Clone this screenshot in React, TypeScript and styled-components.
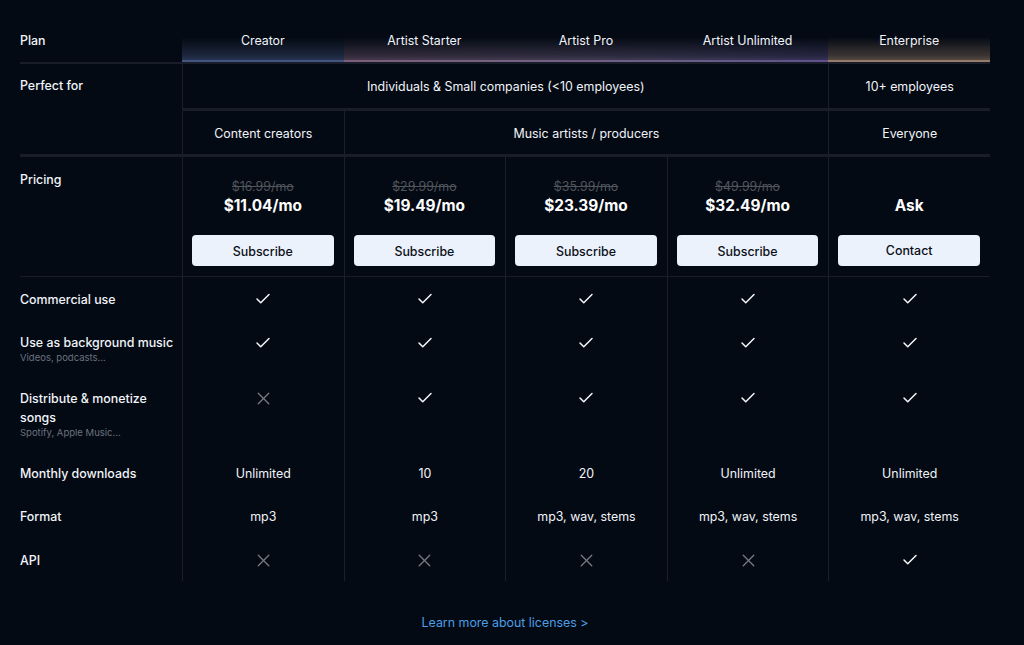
import React from "react";
import styled, { createGlobalStyle } from "styled-components";
import { Check, X } from "lucide-react";

const Global = createGlobalStyle`
  html, body { margin: 0; padding: 0; background: #040a13; }
  body { font-family: Inter, "Liberation Sans", sans-serif; color: #f1f4f9; overflow: hidden; }
`;

const Page = styled.main`
  width: 1024px;
  height: 645px;
  padding: 20px 34px 0 20px;
  box-sizing: border-box;
`;

const Table = styled.div`
  display: grid;
  grid-template-columns: 162px repeat(5, 161.6px);
  font-size: 12.4px;
  line-height: 19.5px;
`;

const Label = styled.div<{ $rows?: number; $line?: number }>`
  grid-row: span ${(p) => p.$rows ?? 1};
  padding: 12.6px 0 11.4px;
  font-weight: 500;
  border-bottom: ${(p) => p.$line ?? 0}px solid #191d29;
`;

const PlanLabel = styled(Label)`
  padding: 11px 0 0;
`;

const PerfectLabel = styled(Label)`
  padding-top: 12px;
`;

const Sub = styled.div`
  font-size: 9.5px;
  font-weight: 400;
  line-height: 12px;
  color: #6b7280;
  margin: -1px 0 1px;
`;

const PlanCell = styled.div<{ $from: string; $to: string }>`
  position: relative;
  height: 44px;
  box-sizing: border-box;
  padding-top: 11px;
  text-align: center;
  border-bottom: 2px solid #191d29;
  &::before {
    content: "";
    position: absolute;
    inset: 0;
    background: linear-gradient(to right, ${(p) => p.$from}, ${(p) => p.$to});
    mask-image: linear-gradient(to bottom, transparent 40%, rgba(0, 0, 0, 0.3) 85%, rgba(0, 0, 0, 0.5) 100%);
  }
  &::after {
    content: "";
    position: absolute;
    left: 0;
    right: 0;
    bottom: 0;
    height: 2px;
    background: linear-gradient(to right, ${(p) => p.$from}, ${(p) => p.$to});
    opacity: 0.6;
  }
`;

const PlanName = styled.span`
  position: relative;
  z-index: 1;
`;

const Cell = styled.div<{ $span?: number }>`
  grid-column: span ${(p) => p.$span ?? 1};
  display: flex;
  justify-content: center;
  align-items: flex-start;
  text-align: center;
  border-left: 1px solid #1b1f2b;
  box-sizing: border-box;
  padding: 12.6px 9.5px 11.4px 9.5px;
`;

const AudienceCell = styled(Cell)`
  align-items: center;
  height: 47px;
  padding: 1px 9.5px 0;
  border-bottom: 3px solid #191d29;
`;

const LowerAudienceCell = styled(AudienceCell)`
  height: 46px;
  padding-top: 2px;
`;

const PriceCell = styled.div`
  border-left: 1px solid #1b1f2b;
  border-bottom: 1px solid #191d29;
  height: 120px;
  padding: 20px 10px 10px 9px;
  box-sizing: border-box;
  display: flex;
  flex-direction: column;
  align-items: stretch;
  text-align: center;
`;

const OldPrice = styled.s`
  display: block;
  height: 17px;
  font-size: 12.4px;
  line-height: 19px;
  color: #50555c;
`;

const Price = styled.div`
  height: 22px;
  font-size: 15.4px;
  font-weight: 700;
  line-height: 24px;
  color: #ffffff;
  margin-bottom: 19px;
`;

const Button = styled.button`
  height: 31.5px;
  border: 0;
  border-radius: 4px;
  background: #ecf2fc;
  color: #0b0f18;
  font: 500 12.4px Inter, "Liberation Sans", sans-serif;
  padding: 1px 0 0;
`;

const CheckIcon = styled(Check)`
  width: 18px;
  height: 18px;
  margin-top: 0.5px;
  color: #f5f7fa;
`;

const CrossIcon = styled(X)`
  width: 21px;
  height: 21px;
  margin: -1px 0 -1px;
  color: #787c83;
`;

const Footer = styled.div`
  width: 970px;
  margin-top: 30px;
  text-align: center;
`;

const LearnMore = styled.a`
  font-size: 12.4px;
  line-height: 20px;
  color: #4a9fe6;
  text-decoration: none;
`;

const prices = [
  ["$16.99/mo", "$11.04/mo", "Subscribe"],
  ["$29.99/mo", "$19.49/mo", "Subscribe"],
  ["$35.99/mo", "$23.39/mo", "Subscribe"],
  ["$49.99/mo", "$32.49/mo", "Subscribe"],
  ["", "Ask", "Contact"],
];

type Value = boolean | string;

const rows: { label: string; sub?: string; values: Value[] }[] = [
  { label: "Commercial use", values: [true, true, true, true, true] },
  { label: "Use as background music", sub: "Videos, podcasts...", values: [true, true, true, true, true] },
  { label: "Distribute & monetize songs", sub: "Spotify, Apple Music...", values: [false, true, true, true, true] },
  { label: "Monthly downloads", values: ["Unlimited", "10", "20", "Unlimited", "Unlimited"] },
  { label: "Format", values: ["mp3", "mp3", "mp3, wav, stems", "mp3, wav, stems", "mp3, wav, stems"] },
  { label: "API", values: [false, false, false, false, true] },
];

const plans: [string, string, string][] = [
  ["Creator", "#56689f", "#56689f"],
  ["Artist Starter", "#9c7596", "#93799f"],
  ["Artist Pro", "#93799f", "#8676a6"],
  ["Artist Unlimited", "#8676a6", "#7564ac"],
  ["Enterprise", "#bd9a80", "#bd9a80"],
];

const renderValue = (v: Value) => {
  if (v === true) return <CheckIcon strokeWidth={2} />;
  if (v === false) return <CrossIcon strokeWidth={1.5} />;
  return v;
};

export default function App() {
  return (
    <Page>
      <Global />
      <Table>
        <PlanLabel $line={2}>Plan</PlanLabel>
        {plans.map(([name, from, to]) => (
          <PlanCell key={name} $from={from} $to={to}>
            <PlanName>{name}</PlanName>
          </PlanCell>
        ))}
        <PerfectLabel $rows={2} $line={3}>Perfect for</PerfectLabel>
        <AudienceCell $span={4}>Individuals &amp; Small companies (&lt;10 employees)</AudienceCell>
        <AudienceCell>10+ employees</AudienceCell>
        <LowerAudienceCell>Content creators</LowerAudienceCell>
        <LowerAudienceCell $span={3}>Music artists / producers</LowerAudienceCell>
        <LowerAudienceCell>Everyone</LowerAudienceCell>
        <Label $line={1}>Pricing</Label>
        {prices.map(([old, price, action]) => (
          <PriceCell key={price}>
            <OldPrice>{old}</OldPrice>
            <Price>{price}</Price>
            <Button>{action}</Button>
          </PriceCell>
        ))}
        {rows.map((row) => (
          <React.Fragment key={row.label}>
            <Label>
              {row.label}
              {row.sub && <Sub>{row.sub}</Sub>}
            </Label>
            {row.values.map((v, i) => (
              <Cell key={i}>{renderValue(v)}</Cell>
            ))}
          </React.Fragment>
        ))}
      </Table>
      <Footer>
        <LearnMore href="#">Learn more about licenses &gt;</LearnMore>
      </Footer>
    </Page>
  );
}
